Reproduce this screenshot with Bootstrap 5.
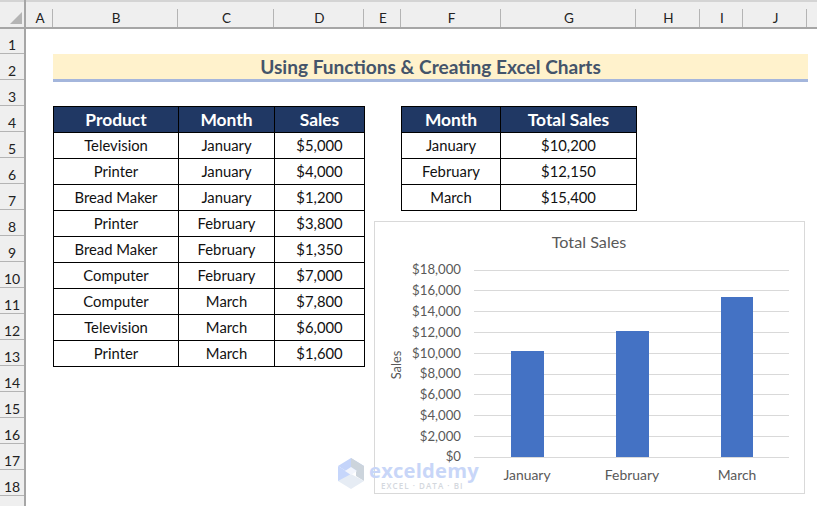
<!DOCTYPE html>
<html lang="en">
<head>
  <meta charset="UTF-8">
  <title>Using Functions &amp; Creating Excel Charts</title>
  <link href="https://cdn.jsdelivr.net/npm/bootstrap@5.3.0/dist/css/bootstrap.min.css" rel="stylesheet">
  <style>
    html, body { width: 817px; height: 506px; overflow: hidden; background: #fff; }
    body { font-family: Lato, "Liberation Sans", sans-serif; color: #111; }
    .top-strip { height: 9px; background: #efefef; border-top: 2px solid #d4d4d4; }
    .col-heads { display: grid; grid-template-columns: 26px 27px 125px 96px 90px 37px 100px 135px 64px 43px 64px 1fr; height: 18px; background: #efefef; border-bottom: 2px solid #a6a6a6; box-sizing: content-box; }
    .col-heads > div { border-right: 1px solid #b4b4b4; font-size: 13.5px; line-height: 18px; text-align: center; color: #222; padding-left: 2px; }
    .col-heads > div:last-child { border-right: 0; }
    .corner-cell { position: relative; border-right: 2px solid #a6a6a6 !important; margin-top: -9px; }
    .corner-tri { display: block; position: absolute; left: 10px; bottom: 3px; width: 0; height: 0; border-left: 12px solid transparent; border-bottom: 12px solid #b4b4b4; }
    .row-heads { width: 26px; flex: none; background: #efefef; border-right: 2px solid #a6a6a6; }
    .row-heads > div { height: 26px; border-bottom: 1px solid #b4b4b4; font-size: 14px; line-height: 33px; text-align: center; color: #222; }
    .row-heads > div:first-child { height: 25px; line-height: 32px; }
    .sheet-body { height: 477px; }
    .sheet-main { padding-left: 27px; padding-top: 25px; width: 791px; }
    .title-band { width: 755px; height: 28px; background: #fff2cc; border-bottom: 3px solid #a4b6dc; color: #44546a; font-weight: 700; font-size: 19.1px; line-height: 26px; text-align: center; }
    .tables-row { margin-top: 24px; }
    .xl-table { table-layout: fixed; margin: 0; border-color: #000; font-size: 14.8px; }
    .xl-table th, .xl-table td { padding: 0; height: 26px; line-height: 25px; text-align: center; vertical-align: middle; border: 1px solid #000; color: #111; font-weight: 400; }
    .xl-table thead th { background: #203864; color: #fff; font-weight: 700; font-size: 17.4px; }
    .tbl-left { width: 311px; }
    .tbl-right { width: 236px; }
    .w-125 { width: 125px; } .w-96 { width: 96px; } .w-90 { width: 90px; }
    .w-100 { width: 100px; } .w-136 { width: 136px; }
    .right-side { margin-left: 9px; }
    .right-table-wrap { padding-left: 27px; }
    .chart-box { position: relative; width: 431px; height: 273px; margin-top: 10px; background: #fff; border: 1px solid #d9d9d9; }
    .chart-box svg { display: block; font-family: Lato, "Liberation Sans", sans-serif; }
    .wm { position: absolute; left: -38px; top: 236px; display: flex; gap: 4px; align-items: flex-start; }
    .wm-name { font-family: "Open Sans", sans-serif; font-weight: 700; font-size: 20.2px; line-height: 22px; margin-top: 1px; color: #c8d6f8; letter-spacing: .2px; }
    .wm-sub { font-family: "Open Sans", sans-serif; font-size: 8px; line-height: 9px; color: #d4d8de; letter-spacing: 1.05px; padding-left: 12px; font-weight: 600; }
  </style>
</head>
<body>
  <div class="top-strip"></div>
  <div class="col-heads">
    <div class="corner-cell"><span class="corner-tri"></span></div>
    <div>A</div><div>B</div><div>C</div><div>D</div><div>E</div>
    <div>F</div><div>G</div><div>H</div><div>I</div><div>J</div><div></div>
  </div>

  <div class="d-flex sheet-body">
    <div class="row-heads" id="rowHeads"></div>
    <div class="sheet-main">
      <div class="title-band">Using Functions &amp; Creating Excel Charts</div>

      <div class="d-flex align-items-start tables-row">
        <table class="table xl-table tbl-left">
          <colgroup><col class="w-125"><col class="w-96"><col class="w-90"></colgroup>
          <thead><tr><th>Product</th><th>Month</th><th>Sales</th></tr></thead>
          <tbody>
            <tr><td>Television</td><td>January</td><td>$5,000</td></tr>
            <tr><td>Printer</td><td>January</td><td>$4,000</td></tr>
            <tr><td>Bread Maker</td><td>January</td><td>$1,200</td></tr>
            <tr><td>Printer</td><td>February</td><td>$3,800</td></tr>
            <tr><td>Bread Maker</td><td>February</td><td>$1,350</td></tr>
            <tr><td>Computer</td><td>February</td><td>$7,000</td></tr>
            <tr><td>Computer</td><td>March</td><td>$7,800</td></tr>
            <tr><td>Television</td><td>March</td><td>$6,000</td></tr>
            <tr><td>Printer</td><td>March</td><td>$1,600</td></tr>
          </tbody>
        </table>

        <div class="right-side">
          <div class="right-table-wrap">
            <table class="table xl-table tbl-right">
              <colgroup><col class="w-100"><col class="w-136"></colgroup>
              <thead><tr><th>Month</th><th>Total Sales</th></tr></thead>
              <tbody>
                <tr><td>January</td><td>$10,200</td></tr>
                <tr><td>February</td><td>$12,150</td></tr>
                <tr><td>March</td><td>$15,400</td></tr>
              </tbody>
            </table>
          </div>

          <div class="chart-box">
            <svg width="429" height="271" viewBox="375 222 429 271">
              <text x="589" y="248" text-anchor="middle" font-size="16.2" fill="#595959">Total Sales</text>
              <g stroke="#d9d9d9" stroke-width="1">
                <line x1="474" x2="789" y1="270.5" y2="270.5"/>
                <line x1="474" x2="789" y1="290.5" y2="290.5"/>
                <line x1="474" x2="789" y1="311.5" y2="311.5"/>
                <line x1="474" x2="789" y1="332.5" y2="332.5"/>
                <line x1="474" x2="789" y1="353.5" y2="353.5"/>
                <line x1="474" x2="789" y1="374.5" y2="374.5"/>
                <line x1="474" x2="789" y1="394.5" y2="394.5"/>
                <line x1="474" x2="789" y1="415.5" y2="415.5"/>
                <line x1="474" x2="789" y1="436.5" y2="436.5"/>
                <line x1="474" x2="789" y1="457.5" y2="457.5"/>
              </g>
              <g fill="#4472c4">
                <rect x="511" y="351" width="33" height="106"/>
                <rect x="616" y="331" width="33" height="126"/>
                <rect x="721" y="297" width="32" height="160"/>
              </g>
              <g font-size="13.2" fill="#595959" text-anchor="end">
                <text x="461" y="274">$18,000</text>
                <text x="461" y="295">$16,000</text>
                <text x="461" y="316">$14,000</text>
                <text x="461" y="337">$12,000</text>
                <text x="461" y="358">$10,000</text>
                <text x="461" y="378">$8,000</text>
                <text x="461" y="399">$6,000</text>
                <text x="461" y="420">$4,000</text>
                <text x="461" y="441">$2,000</text>
                <text x="461" y="461">$0</text>
              </g>
              <g font-size="13.9" fill="#595959" text-anchor="middle">
                <text x="527" y="480">January</text>
                <text x="632" y="480">February</text>
                <text x="737" y="480">March</text>
              </g>
              <text transform="translate(401 365) rotate(-90)" text-anchor="middle" font-size="12.8" fill="#595959">Sales</text>
            </svg>

            <div class="wm">
              <svg width="28" height="32" viewBox="0 0 28 32">
                <polygon points="14,0 27,8 14,16 1,8" fill="#c4d4fa"/>
                <polygon points="14,0 27,8 27,23 19,18 19,12 14,9" fill="#ccd4dc"/>
                <polygon points="1,8 14,16 14,24 1,23" fill="#c6d6fb"/>
                <polygon points="1,23 14,16 27,23 14,31" fill="#e6ecf4"/>
                <polygon points="14,9 20,13 14,17 8,13" fill="#f2f5fc"/>
              </svg>
              <div>
                <div class="wm-name">exceldemy</div>
                <div class="wm-sub">EXCEL · DATA · BI</div>
              </div>
            </div>
          </div>
        </div>
      </div>
    </div>
  </div>

  <script>
    const rowHeads = document.getElementById('rowHeads');
    for (let i = 1; i <= 19; i++) {
      const cell = document.createElement('div');
      cell.textContent = i <= 18 ? i : '';
      rowHeads.appendChild(cell);
    }
  </script>
  <script src="https://cdn.jsdelivr.net/npm/bootstrap@5.3.0/dist/js/bootstrap.bundle.min.js"></script>
</body>
</html>
